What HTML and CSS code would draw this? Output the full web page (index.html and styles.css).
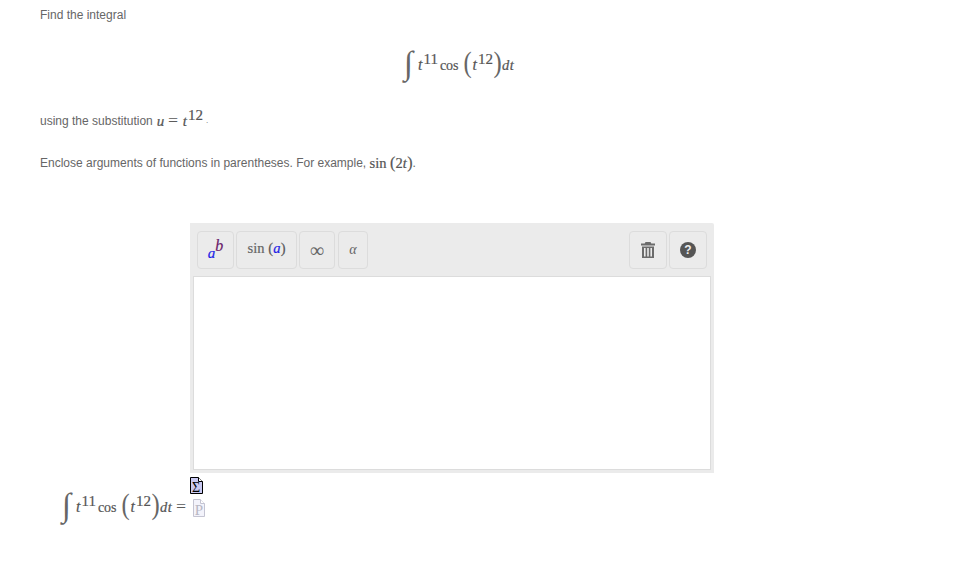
FILE: index.html
```html
<!DOCTYPE html>
<html lang="en">
<head>
<meta charset="utf-8">
<title>Find the integral</title>
<link rel="stylesheet" href="styles.css">
</head>
<body>
<main class="page">
  <p class="line first">Find the integral</p>
  <div class="display-eq">
    <span class="math">
      <span class="int">∫</span><i class="var">t</i><span class="sup">11</span><span class="fn">cos</span><span class="paren">(</span><i class="var">t</i><span class="sup">12</span><span class="paren close">)</span><i class="var dt">dt</i>
    </span>
  </div>
  <p class="line sub-line">using the substitution <span class="inline-math"><i class="var">u</i><span class="eq">=</span><i class="var">t</i><span class="sup">12</span></span><span class="dot">.</span></p>
  <p class="line hint">Enclose arguments of functions in parentheses. For example, <span class="inline-math big"><span class="fn-b">sin</span> <span class="pb">(</span>2<i class="var">t</i><span class="pb">)</span></span>.</p>

  <section class="editor">
    <div class="toolbar">
      <div class="tools">
        <button class="btn b-pow" type="button"><i class="a">a</i><i class="b">b</i></button>
        <button class="btn b-sin" type="button">sin <span class="pa">(<i class="a">a</i>)</span></button>
        <button class="btn b-inf" type="button">∞</button>
        <button class="btn b-alpha" type="button"><i>α</i></button>
      </div>
      <div class="tools right">
        <button class="btn b-icon" type="button" aria-label="Clear">
          <svg width="14" height="16" viewBox="0 0 14 16"><path fill="#6b6b6b" d="M4.500 0h5l.8 1.500H14V3.500H0V1.500h3.700zM1 4.500h12V16H1zM3 6v8.500h1.600V6zm3.200 0v8.500h1.600V6zm3.200 0v8.500H11V6z"/></svg>
        </button>
        <button class="btn b-icon" type="button" aria-label="Help"><span class="help">?</span></button>
      </div>
    </div>
    <div class="entry"></div>
  </section>

  <div class="answer">
    <span class="math">
      <span class="int">∫</span><i class="var">t</i><span class="sup">11</span><span class="fn">cos</span><span class="paren">(</span><i class="var">t</i><span class="sup">12</span><span class="paren close">)</span><i class="var dt">dt</i><span class="eq ans-eq">=</span>
    </span>
    <span class="file-icons">
      <svg class="file" width="13" height="17" viewBox="0 0 13 17"><path fill="#c9c9f2" stroke="#000" d="M.5.5h8l4 4v12H.5z"/><path fill="#fff" stroke="#000" d="M8.500.5v4h4"/><text x="6" y="15" text-anchor="middle" class="file-t">Σ</text></svg>
      <svg class="file file-pending" width="12" height="18" viewBox="0 0 12 18"><path fill="#f3f3fb" stroke="#c4c4d2" d="M.5.5h7l4 4v13H.5z"/><path fill="#fff" stroke="#c4c4d2" d="M7.500.5v4h4"/><text x="6" y="16" text-anchor="middle" class="file-p">P</text></svg>
    </span>
  </div>
</main>
</body>
</html>
```
FILE: styles.css
```css
* { box-sizing: border-box; }
html, body { margin: 0; padding: 0; background: #fff; }
body { width: 964px; height: 561px; overflow: hidden; font-family: "Liberation Sans", Arial, sans-serif; font-size: 12px; color: #666; }
.page { padding: 8px 0 0 40px; }
.line { margin: 0; line-height: 14px; }

.math, .inline-math { font-family: "Liberation Serif", "DejaVu Serif", serif; color: #555; white-space: nowrap; -webkit-text-stroke: .2px #555; }
.var { font-style: italic; letter-spacing: 1px; }
.math { display: inline-flex; align-items: baseline; font-size: 16px; }
.int { font-size: 33px; font-style: italic; line-height: 36px; margin-right: 3px; width: 11px; -webkit-text-stroke: 0; transform: translateY(4px); color: #666; }
.sup { font-size: 15px; position: relative; top: -6px; margin-left: 0; }
.fn { font-size: 14px; margin-left: 2px; }
.paren { font-size: 29px; line-height: 30px; margin: 0 3px 0 4px; width: 7px; -webkit-text-stroke: 0; transform: translateY(2px) scaleX(.85); color: #666; }
.close { margin: 0 2px 0 0; }
.dt { font-size: 14.500px; letter-spacing: .5px; }

.display-eq { margin: 23px 0 0 364px; height: 41px; padding-bottom: 14px; display: flex; align-items: center; }
.sub-line { margin-top: 20px; height: 22px; display: flex; align-items: flex-end; }
.sub-line .inline-math { font-size: 15px; margin-left: 4px; display: inline-flex; align-items: baseline; line-height: 14px; }
.sub-line .sup { top: -6px; margin-left: 0; }
.sub-line .eq { margin: 0 5px 0 3px; font-size: 17px; }
.eq { color: #666; }
.dot { font-size: 8px; margin-left: 3px; }
.hint { margin-top: 26px; height: 18px; display: flex; align-items: center; white-space: pre; }
.inline-math.big { font-size: 14.500px; }
.hint .var { letter-spacing: .5px; }
.pb { font-size: 16px; }

.editor { width: 524px; height: 250px; margin: 51px 0 0 150px; padding: 8px 3px 3px; background: #ebebeb; border-top-right-radius: 2px; }
.toolbar { height: 38px; display: flex; justify-content: space-between; padding: 0 4px; }
.tools { display: flex; gap: 2px; }
.btn { height: 38px; padding: 0; border: 1px solid #dcdcdc; border-radius: 4px; background: #ebebeb; font-family: "Liberation Serif", serif; color: #666; font-size: 13px; display: flex; align-items: center; justify-content: center; }
.b-pow { width: 37px; }
.b-sin { width: 61px; padding-bottom: 3px; font-size: 14.500px; letter-spacing: .1px; white-space: pre; -webkit-text-stroke: .2px #666; }
.b-inf { width: 36px; font-size: 20px; }
.b-alpha { width: 30px; margin-left: 1px; font-size: 14px; }
.b-icon { width: 38px; }
.b-pow .a { color: #1f1fe6; font-size: 15px; position: relative; top: 3px; -webkit-text-stroke: .2px #1f1fe6; }
.b-pow .b { color: #6a1b6a; font-size: 16px; position: relative; top: -4px; -webkit-text-stroke: .2px #6a1b6a; }
.pa { color: #555; }
.pa .a { color: #1f1fe6; -webkit-text-stroke: .2px #1f1fe6; }
.help { width: 16px; height: 16px; border-radius: 50%; background: #555; color: #eee; font: bold 12px/16px "Liberation Sans", sans-serif; text-align: center; }
.entry { height: 194px; margin-top: 7px; background: #fff; border: 1px solid #dcdcdc; }

.answer { display: flex; align-items: flex-end; margin: 4px 0 0 22px; height: 44px; }
.answer .math { margin-bottom: 2px; }
.ans-eq { margin-left: 4px; font-size: 17px; }
.file-icons { display: flex; flex-direction: column; gap: 5px; margin-left: 4px; align-items: flex-start; margin-bottom: 4px; }
.file { display: block; }
.file-pending { margin-left: 3px; }
.file-t { font: 14px "Liberation Serif", serif; fill: #000; }
.file-p { font: 15px "Liberation Serif", serif; fill: #b8b8c4; }
```
